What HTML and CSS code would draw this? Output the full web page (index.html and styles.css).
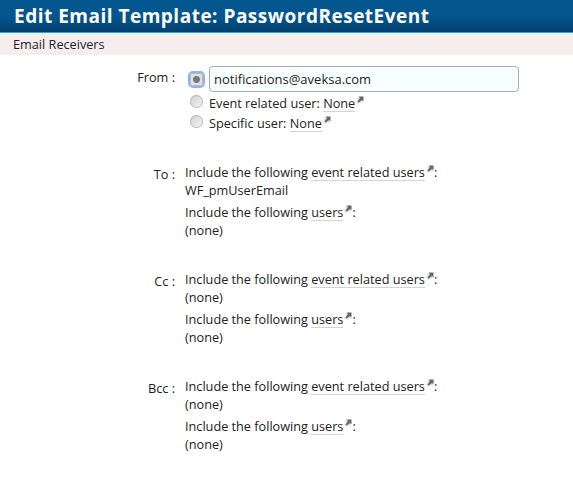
FILE: index.html
```html
<!DOCTYPE html>
<html lang="en">
<head>
  <meta charset="UTF-8">
  <meta name="viewport" content="width=device-width, initial-scale=1.0">
  <title>Edit Email Template</title>
  <link rel="stylesheet" href="styles.css">
</head>
<body>
  <svg class="defs" width="0" height="0">
    <symbol id="popout" viewBox="0 0 8 8">
      <path d="M0.5 1.5H6.5V7.5L5 6L2 8L0 6L2.2 3.2Z" fill="#dcdcdc"/>
      <path d="M2.5 0.5H7.5V5.5L6 4L2.8 6.6L1.6 5.4L4 2Z" fill="#666"/>
    </symbol>
  </svg>

  <h1 class="title">Edit Email Template: PasswordResetEvent</h1>
  <div class="subtitle">Email Receivers</div>

  <div class="form">
    <div class="row row-from">
      <div class="label">From :</div>
      <div class="from-options">
        <div class="option">
          <span class="radio checked"></span>
          <input class="email" type="text" value="notifications@aveksa.com">
        </div>
        <div class="option">
          <span class="radio"></span>
          <span>Event related user: <a class="link">None</a><svg class="popout"><use href="#popout"/></svg></span>
        </div>
        <div class="option">
          <span class="radio"></span>
          <span>Specific user: <a class="link">None</a><svg class="popout"><use href="#popout"/></svg></span>
        </div>
      </div>
    </div>

    <div class="row">
      <div class="label">To :</div>
      <div class="receivers">
        <p>Include the following <a class="link">event related users</a><svg class="popout"><use href="#popout"/></svg>:</p>
        <p>WF_pmUserEmail</p>
        <p class="second">Include the following <a class="link">users</a><svg class="popout"><use href="#popout"/></svg>:</p>
        <p>(none)</p>
      </div>
    </div>

    <div class="row">
      <div class="label">Cc :</div>
      <div class="receivers">
        <p>Include the following <a class="link">event related users</a><svg class="popout"><use href="#popout"/></svg>:</p>
        <p>(none)</p>
        <p class="second">Include the following <a class="link">users</a><svg class="popout"><use href="#popout"/></svg>:</p>
        <p>(none)</p>
      </div>
    </div>

    <div class="row">
      <div class="label">Bcc :</div>
      <div class="receivers">
        <p>Include the following <a class="link">event related users</a><svg class="popout"><use href="#popout"/></svg>:</p>
        <p>(none)</p>
        <p class="second">Include the following <a class="link">users</a><svg class="popout"><use href="#popout"/></svg>:</p>
        <p>(none)</p>
      </div>
    </div>
  </div>
</body>
</html>
```

FILE: styles.css
```css
body {
  margin: 0;
  background: #fff;
  color: #222;
  font-family: "Open Sans", sans-serif;
  font-size: 12.7px;
}
.defs {
  display: block;
  height: 0;
}
.title {
  margin: 0;
  height: 32px;
  padding-left: 14px;
  background: linear-gradient(#04568f, #04568f 50%, #03406f);
  border-bottom: 1px solid #1ab0c8;
  color: #fff;
  font-size: 19px;
  font-weight: 700;
  line-height: 32px;
  letter-spacing: 0.5px;
}
.subtitle {
  height: 22px;
  padding-left: 13px;
  background: #f6eeee;
  line-height: 23px;
}
.form {
  padding-top: 11px;
}
.row {
  display: flex;
  margin-bottom: 31px;
}
.row-from {
  margin-bottom: 30px;
}
.label {
  width: 175px;
  padding-top: 1px;
  text-align: right;
  line-height: 20px;
  white-space: pre;
}
.from-options {
  margin-left: 15px;
}
.option {
  display: flex;
  align-items: center;
  height: 20px;
}
.option:first-child {
  height: 26px;
  margin-bottom: 1px;
}
.radio {
  flex: none;
  width: 13px;
  height: 13px;
  margin-right: 6px;
  margin-bottom: 4px;
  border-radius: 50%;
  background: linear-gradient(135deg, #d0d0d0, #f4f4f4);
  box-shadow: inset 0 0 0 1px #bbb;
}
.radio.checked {
  margin-bottom: 0;
  background: radial-gradient(circle, #777 0 3px, #ddd 4px, #eee);
  outline: 2px solid #8db4f0;
  border-radius: 3px;
}
.email {
  width: 310px;
  height: 26px;
  box-sizing: border-box;
  padding: 0 4px;
  border: 1px solid #aaa;
  border-radius: 4px;
  background: #f8ffff;
  color: #222;
  font-family: "Open Sans", sans-serif;
  font-size: 13px;
}
.link {
  display: inline-block;
  border-bottom: 1px solid #d4d4d4;
  line-height: 16px;
}
.popout {
  width: 8px;
  height: 8px;
  margin-left: 1px;
  vertical-align: 4px;
}
.receivers {
  margin-left: 10px;
}
.receivers p {
  margin: 0;
  line-height: 18px;
}
.receivers p.second {
  margin-top: 4px;
}
```
